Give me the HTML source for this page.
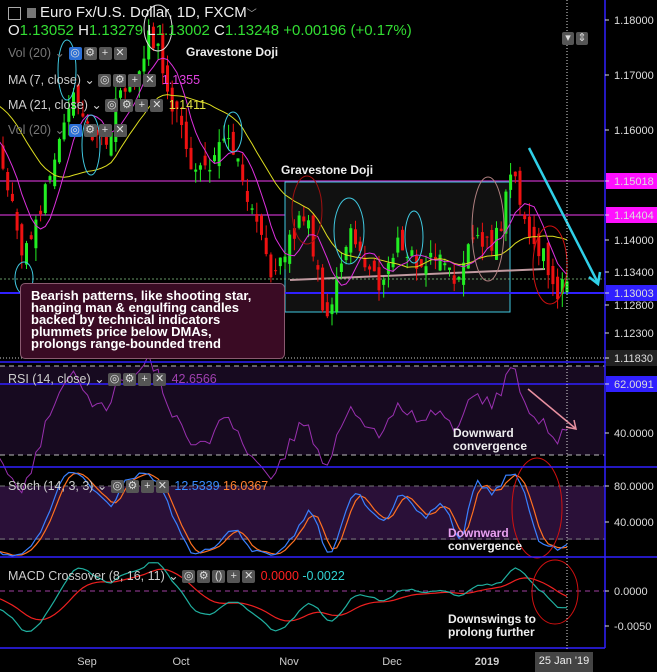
<!DOCTYPE html>
<html><head><meta charset="utf-8"><style>
body{margin:0;background:#000;width:657px;height:672px;overflow:hidden;font-family:"Liberation Sans",sans-serif}
svg{position:absolute;left:0;top:0}
.t{position:absolute;white-space:nowrap}
.btn{display:inline-block;width:13px;height:13px;background:#555;border-radius:2px;margin-right:2px;vertical-align:middle;color:#ddd;font-size:11px;line-height:13px;text-align:center}
.lg{position:absolute;left:8px;font-size:12.5px;color:#ccc;white-space:nowrap}
</style></head><body>
<svg id="s" width="657" height="672" xmlns="http://www.w3.org/2000/svg">
<rect width="657" height="672" fill="#000"/>
<rect x="0" y="366" width="605" height="89" fill="#170a20"/>
<rect x="0" y="486" width="605" height="54" fill="#2a1038"/>
<g id="g"></g>
</svg>
<div class="t" style="left:8px;top:4px;font-size:15px;color:#eee"><span style="display:inline-block;width:11px;height:11px;border:1px solid #aaa;vertical-align:middle;margin-right:6px"></span><span style="display:inline-block;width:9px;height:10px;background:#777;vertical-align:middle;margin-right:4px"></span>Euro Fx/U.S. Dollar, 1D, FXCM<span style="font-size:10px;color:#aaa">﹀</span></div>
<div class="t" style="left:8px;top:22px;font-size:15px;color:#eee">O<span style="color:#33dd33">1.13052</span> H<span style="color:#33dd33">1.13279</span> L<span style="color:#33dd33">1.13002</span> C<span style="color:#33dd33">1.13248</span> <span style="color:#33dd33">+0.00196 (+0.17%)</span></div>
<div class="lg" style="top:45px;color:#777">Vol (20) ⌄ <span class="btn" style="background:#2a6fd6">◎</span><span class="btn">⚙</span><span class="btn">+</span><span class="btn">✕</span></div>
<div class="lg" style="top:72px">MA (7, close) ⌄ <span class="btn">◎</span><span class="btn">⚙</span><span class="btn">+</span><span class="btn">✕</span> <span style="color:#e040e0">1.1355</span></div>
<div class="lg" style="top:97px">MA (21, close) ⌄ <span class="btn">◎</span><span class="btn">⚙</span><span class="btn">+</span><span class="btn">✕</span> <span style="color:#e0e040">1.1411</span></div>
<div class="lg" style="top:122px;color:#777">Vol (20) ⌄ <span class="btn" style="background:#2a6fd6">◎</span><span class="btn">⚙</span><span class="btn">+</span><span class="btn">✕</span></div>
<div class="t" style="left:186px;top:45px;font-size:12px;font-weight:bold;color:#eee">Gravestone Doji</div>
<div class="t" style="left:281px;top:163px;font-size:12px;font-weight:bold;color:#eee">Gravestone Doji</div>
<div class="t" style="left:20px;top:283px;width:253px;height:68px;background:#3a0b24;border:1px solid #8a5a70;border-radius:5px;padding:6px 0 0 10px;font-size:13px;font-weight:bold;color:#fff;line-height:12px;font-family:'Liberation Sans',sans-serif">Bearish patterns, like shooting star,<br>hanging man &amp; engulfing candles<br>backed by technical indicators<br>plummets price below DMAs,<br>prolongs range-bounded trend</div>
<div class="t" style="left:562px;top:30px"><span class="btn" style="width:12px">▾</span><span class="btn" style="width:12px">⇕</span></div>
<div class="lg" style="top:371px">RSI (14, close) ⌄ <span class="btn">◎</span><span class="btn">⚙</span><span class="btn">+</span><span class="btn">✕</span> <span style="color:#a040b0">42.6566</span></div>
<div class="lg" style="top:478px">Stoch (14, 3, 3) ⌄ <span class="btn">◎</span><span class="btn">⚙</span><span class="btn">+</span><span class="btn">✕</span> <span style="color:#3a8cff">12.5339</span> <span style="color:#ff8030">16.0367</span></div>
<div class="lg" style="top:568px">MACD Crossover (8, 16, 11) ⌄ <span class="btn">◎</span><span class="btn">⚙</span><span class="btn">()</span><span class="btn">+</span><span class="btn">✕</span> <span style="color:#ff2020">0.0000</span> <span style="color:#30d0d0">-0.0022</span></div>
<div class="t" style="left:453px;top:427px;font-size:12px;font-weight:bold;color:#eee;line-height:13px">Downward<br>convergence</div>
<div class="t" style="left:448px;top:527px;font-size:12px;font-weight:bold;color:#e8a0f0;line-height:13px">Downward<br><span style="color:#eee">convergence</span></div>
<div class="t" style="left:448px;top:613px;font-size:12px;font-weight:bold;color:#eee;line-height:13px">Downswings to<br>prolong further</div>
<div class="t" style="left:535px;top:652px;width:58px;height:20px;background:#444;color:#eee;font-size:11px;line-height:18px;text-align:center">25 Jan '19</div>
<script>
var G=document.getElementById('g'),h='';
function py(p){return 20+(1.18-p)*5500;}
var kp=[[-140,1.160],[-60,1.170],[0,1.153],[10,1.150],[20,1.136],[40,1.145],[60,1.160],[75,1.168],[90,1.160],[105,1.157],[120,1.167],[135,1.170],[150,1.177],[160,1.174],[170,1.166],[185,1.158],[195,1.152],[215,1.155],[230,1.159],[245,1.148],[260,1.140],[275,1.133],[290,1.140],[305,1.145],[318,1.135],[325,1.124],[335,1.131],[350,1.143],[365,1.135],[380,1.132],[400,1.140],[420,1.135],[440,1.138],[460,1.132],[475,1.142],[490,1.139],[500,1.142],[512,1.153],[520,1.148],[530,1.140],[545,1.137],[558,1.130],[567,1.1325]];
function kv(x){for(var i=0;i<kp.length-1;i++){if(x>=kp[i][0]&&x<=kp[i+1][0]){var t=(x-kp[i][0])/(kp[i+1][0]-kp[i][0]);return kp[i][1]+t*(kp[i+1][1]-kp[i][1]);}}return kp[kp.length-1][1];}
function rnd(i){var v=Math.sin(i*12.9898+3.1)*43758.5453;return v-Math.floor(v);}
var C=[],O=[],H=[],L=[],X=[],n=0,step=4.7;
var prev=kv(-150);
for(var x=567-step*150;x<=567.1;x+=step){var c=kv(x)+(rnd(n)-0.5)*0.0035;if(x>566)c=1.13248;var o=(x>566)?1.13052:prev+(rnd(n+99)-0.5)*0.004;X.push(x);C.push(c);O.push(o);H.push(Math.max(o,c)+rnd(n+7)*0.0025);L.push(Math.min(o,c)-rnd(n+17)*0.0025);prev=c;n++;}
h+='<line x1="0" x2="605" y1="181" y2="181" stroke="#c030c0" stroke-width="1.2"/>';
h+='<line x1="0" x2="605" y1="215" y2="215" stroke="#c030c0" stroke-width="1.2"/>';
h+='<rect x="285" y="182" width="225" height="130" fill="#111" stroke="#40c8e0" stroke-width="1"/>';
h+='<line x1="0" x2="605" y1="279" y2="279" stroke="#8c8" stroke-width="0.8" stroke-dasharray="2,2"/>';
h+='<line x1="0" x2="605" y1="293" y2="293" stroke="#3020ff" stroke-width="2"/>';
h+='<line x1="290" x2="545" y1="280" y2="269" stroke="#c09aa0" stroke-width="2"/>';
for(var i=0;i<n;i++){if(X[i]<-3)continue;var col=C[i]>=O[i]?'#22ee22':'#ee1111';var y1=py(Math.max(O[i],C[i])),y2=py(Math.min(O[i],C[i]));if(y2-y1<1)y2=y1+1;
h+='<line x1="'+X[i].toFixed(1)+'" x2="'+X[i].toFixed(1)+'" y1="'+py(H[i]).toFixed(1)+'" y2="'+py(L[i]).toFixed(1)+'" stroke="'+col+'" stroke-width="1"/>';
h+='<rect x="'+(X[i]-1.5).toFixed(1)+'" y="'+y1.toFixed(1)+'" width="3" height="'+(y2-y1).toFixed(1)+'" fill="'+col+'"/>';}
function sma(a,p,i){var s=0;for(var k=i-p+1;k<=i;k++)s+=a[Math.max(k,0)];return s/p;}
function line(vals,fy,col,w){var s='';for(var i=0;i<n;i++){if(X[i]<-5||vals[i]==null)continue;s+=X[i].toFixed(1)+','+fy(vals[i]).toFixed(1)+' ';}h+='<polyline points="'+s+'" fill="none" stroke="'+col+'" stroke-width="'+(w||1)+'"/>';}
var m7=[],m21=[];for(var i=0;i<n;i++){m7.push(sma(C,7,i));m21.push(sma(C,21,i));}
line(m21,py,'#dddd20',1);line(m7,py,'#dd30dd',1);
function el(cx,cy,rx,ry,c){h+='<ellipse cx="'+cx+'" cy="'+cy+'" rx="'+rx+'" ry="'+ry+'" fill="none" stroke="'+c+'" stroke-width="1"/>';}
el(158,28,14,23,'#ddd');el(67,70,9,30,'#40c8e0');el(91,145,9,30,'#40c8e0');el(233,132,9,20,'#40c8e0');el(24,278,9,16,'#40c8e0');
el(307,210,15,34,'#a01010');el(349,231,15,33,'#40c8e0');el(414,237,9,26,'#40c8e0');el(488,229,16,52,'#b08080');el(550,265,17,39,'#d01010');
h+='<line x1="529" y1="148" x2="598" y2="283" stroke="#30d0e8" stroke-width="2.5"/><polyline points="589,277 598,284 600,272" fill="none" stroke="#30d0e8" stroke-width="2.5"/>';
var rsi=[],ag=0,al=0;for(var i=0;i<n;i++){if(i==0){rsi.push(50);continue;}var d=C[i]-C[i-1];var g=d>0?d:0,l=d<0?-d:0;ag=(ag*13+g)/14;al=(al*13+l)/14;rsi.push(al==0?100:100-100/(1+ag/al));}
function ry(v){return 433-(v-40)*2.23;}
h+='<line x1="0" x2="605" y1="366" y2="366" stroke="#bbb" stroke-dasharray="5,4"/><line x1="0" x2="605" y1="455" y2="455" stroke="#bbb" stroke-dasharray="5,4"/>';
h+='<line x1="0" x2="605" y1="384" y2="384" stroke="#3020ff" stroke-width="1.5"/>';
line(rsi,ry,'#9a30b0',1);
h+='<line x1="528" y1="389" x2="575" y2="428" stroke="#e890a0" stroke-width="1.5"/><polyline points="566,427 576,429 574,420" fill="none" stroke="#e890a0" stroke-width="1.5"/>';
var k=[];for(var i=0;i<n;i++){var hh=-1,ll=9;for(var j=Math.max(0,i-13);j<=i;j++){hh=Math.max(hh,H[j]);ll=Math.min(ll,L[j]);}k.push(100*(C[i]-ll)/(hh-ll));}
var ks=[],ds=[];for(var i=0;i<n;i++)ks.push(sma(k,3,i));for(var i=0;i<n;i++)ds.push(sma(ks,3,i));
function sy2(v){return 540-(v-20)*0.9;}
h+='<line x1="0" x2="605" y1="486" y2="486" stroke="#777" stroke-dasharray="5,4"/><line x1="0" x2="605" y1="539" y2="539" stroke="#777" stroke-dasharray="5,4"/>';
line(ds,sy2,'#ff7020',1.2);line(ks,sy2,'#3a80ff',1.2);
el(537,508,25,50,'#d01010');
function ema(a,p){var r=[],e=a[0],al2=2/(p+1);for(var i=0;i<a.length;i++){e=a[i]*al2+e*(1-al2);r.push(e);}return r;}
var e8=ema(C,8),e16=ema(C,16),mc=[];for(var i=0;i<n;i++)mc.push(e8[i]-e16[i]);var sg=ema(mc,11);
function my(v){return 591-v*7000;}
h+='<line x1="0" x2="605" y1="591" y2="591" stroke="#a040a0" stroke-dasharray="5,4"/>';
line(sg,my,'#ee2020',1.2);line(mc,my,'#20b0a0',1.2);
el(555,592,23,32,'#d01010');
h+='<line x1="0" x2="657" y1="362" y2="362" stroke="#3020ff" stroke-width="1.5"/><line x1="0" x2="657" y1="467" y2="467" stroke="#3020ff" stroke-width="1.5"/><line x1="0" x2="657" y1="557" y2="557" stroke="#3020ff" stroke-width="1.5"/><line x1="0" x2="605" y1="648" y2="648" stroke="#3020ff" stroke-width="1.5"/>';
h+='<line x1="605" x2="605" y1="0" y2="648" stroke="#3020ff" stroke-width="1.5"/>';
h+='<line x1="567" x2="567" y1="0" y2="650" stroke="#ddd" stroke-dasharray="1,2"/>';
h+='<line x1="0" x2="605" y1="358" y2="358" stroke="#ccc" stroke-dasharray="1,2"/>';
function lab(y,t,bg){if(bg)h+='<rect x="606" y="'+(y-8)+'" width="51" height="16" fill="'+bg+'"/>';h+='<line x1="605" x2="609" y1="'+y+'" y2="'+y+'" stroke="#ddd"/><text x="614" y="'+(y+4)+'" fill="#ddd" font-size="11" font-family="Liberation Sans">'+t+'</text>';}
lab(20,'1.18000');lab(75,'1.17000');lab(130,'1.16000');lab(240,'1.14000');lab(272,'1.13400');lab(305,'1.12800');lab(333,'1.12300');lab(358,'1.11830','#222');
lab(181,'1.15018','#ff10ff');lab(215,'1.14404','#ff10ff');lab(293,'1.13003','#3020ff');
lab(433,'40.0000');lab(384,'62.0091','#3020ff');lab(486,'80.0000');lab(522,'40.0000');lab(591,'0.0000');lab(626,'-0.0050');
function xl(x,t,b){h+='<text x="'+x+'" y="665" fill="#ccc" font-size="11" text-anchor="middle" font-family="Liberation Sans"'+(b?' font-weight="bold"':'')+'>'+t+'</text>';}
xl(87,'Sep');xl(181,'Oct');xl(289,'Nov');xl(392,'Dec');xl(487,'2019',1);
G.innerHTML=h;
</script>
</body></html>
